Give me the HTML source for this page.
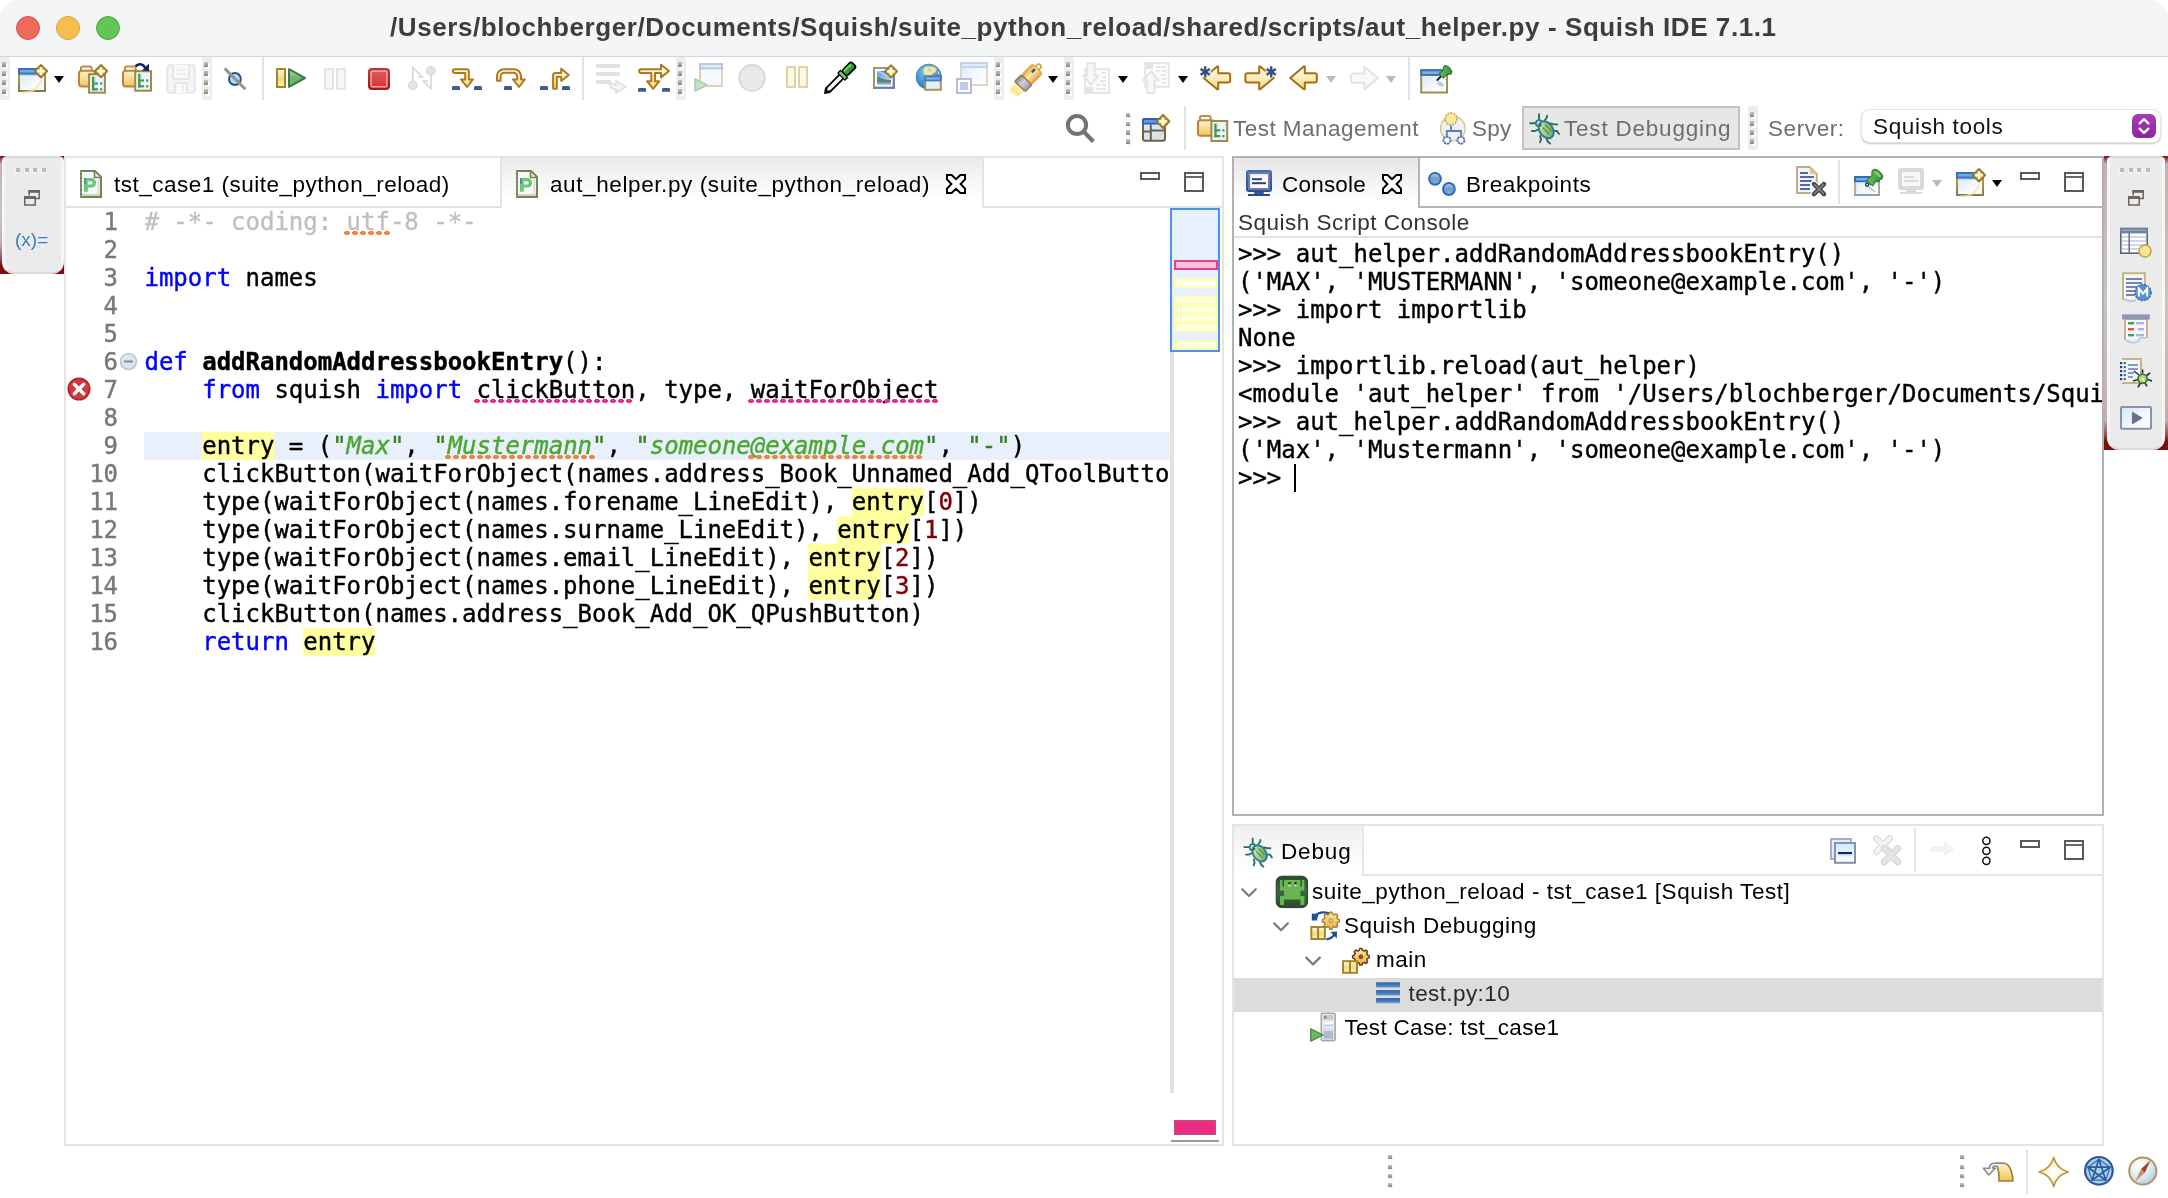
<!DOCTYPE html>
<html lang="en">
<head>
<meta charset="utf-8">
<title>Squish IDE</title>
<style>
html,body{margin:0;padding:0}
body{width:2168px;height:1198px;overflow:hidden;background:#fff;position:relative;font-family:"Liberation Sans",sans-serif;font-size:22.5px;color:#000}
#root{position:absolute;left:0;top:0;width:2168px;height:1198px;will-change:transform}
.a{position:absolute}
.t{position:absolute;white-space:pre;line-height:28px;height:28px}
.ui{font-family:"Liberation Sans",sans-serif;font-size:22.5px}
.mono{font-family:"DejaVu Sans Mono","Liberation Mono",monospace;font-size:24px;letter-spacing:-0.015px;-webkit-text-stroke:0.4px currentColor}
#titlebar{left:0;top:0;width:2168px;height:56px;background:#f4f5f7;border-bottom:1.5px solid #d6d6d6;border-radius:18px 18px 0 0}
#title{left:390px;top:12px;font-weight:bold;font-size:26px;color:#3d3d3d;line-height:30px;height:30px;letter-spacing:0.585px}
.tl{position:absolute;top:16px;width:24px;height:24px;border-radius:50%;box-sizing:border-box}
.hd{position:absolute;width:10px;background:#ededed}
.hd i{position:absolute;left:2px;width:4px;height:4.6px;background:linear-gradient(#cbc7bb,#8a8674);box-shadow:2px 2px 0 #fdfdfd}
.dot{position:absolute;width:4px;height:4.4px;background:linear-gradient(#cbc7bb,#8a8674);box-shadow:1.5px 1.5px 0 #f4f4f4}
.vs{position:absolute;width:2px;background:#e2e2e2}
.dd{position:absolute;width:0;height:0;border-left:5.2px solid transparent;border-right:5.2px solid transparent;border-top:7.4px solid #000}
.dd.g{border-top-color:#bcbcbc}
.panel{position:absolute;box-sizing:border-box;border:2px solid #e2e2e2;background:#fff}
.ln{position:absolute;left:65px;width:53px;text-align:right;color:#787878}
.code{position:absolute;left:144.5px}
.kw{color:#0000ff}
.cm{color:#c0c0c0}
.st{color:#4aa830;font-style:italic}
.q{color:#3f7d20}
.nu{color:#800000}
.fn{font-weight:bold}
.hl{background:#ffffa0;display:inline-block;height:28px;line-height:28px;vertical-align:top}
.sq{position:relative;display:inline-block;height:28px;line-height:28px;vertical-align:top}
.sq::after{content:"";position:absolute;left:-2.5px;top:22.8px;height:4.4px;width:var(--w);background-repeat:repeat-x;background-size:8px 4.4px}
.sq.o::after{background-image:radial-gradient(ellipse 3.1px 2.3px at 3px 2.2px,#f0853f 0,#f0853f 88%,rgba(240,133,63,0) 100%)}
.sq.p::after{background-image:radial-gradient(ellipse 3.1px 2.3px at 3px 2.2px,#e8308a 0,#e8308a 88%,rgba(232,48,138,0) 100%)}
</style>
</head>
<body>
<div id="root">
<!-- title bar -->
<div id="titlebar" class="a"></div>
<div class="tl" style="left:16px;background:#ee6a5f;border:1px solid #d8554a"></div>
<div class="tl" style="left:56px;background:#f5be4f;border:1px solid #d9a23d"></div>
<div class="tl" style="left:96px;background:#62c554;border:1px solid #52a943"></div>
<div id="title" class="t">/Users/blochberger/Documents/Squish/suite_python_reload/shared/scripts/aut_helper.py - Squish IDE 7.1.1</div>
<!-- toolbar 1 -->
<div class="hd" style="left:0px;top:57px;height:43px"><i style="top:5.200000000000003px"></i><i style="top:14.299999999999997px"></i><i style="top:23.200000000000003px"></i><i style="top:32px"></i></div>
<div class="hd" style="left:202px;top:57px;height:43px"><i style="top:5.200000000000003px"></i><i style="top:14.299999999999997px"></i><i style="top:23.200000000000003px"></i><i style="top:32px"></i></div>
<div class="hd" style="left:676px;top:57px;height:43px"><i style="top:5.200000000000003px"></i><i style="top:14.299999999999997px"></i><i style="top:23.200000000000003px"></i><i style="top:32px"></i></div>
<div class="hd" style="left:994px;top:57px;height:43px"><i style="top:5.200000000000003px"></i><i style="top:14.299999999999997px"></i><i style="top:23.200000000000003px"></i><i style="top:32px"></i></div>
<div class="hd" style="left:1064px;top:57px;height:43px"><i style="top:5.200000000000003px"></i><i style="top:14.299999999999997px"></i><i style="top:23.200000000000003px"></i><i style="top:32px"></i></div>
<div class="vs" style="left:262px;top:57px;height:43px;background:#e2e2e2"></div>
<div class="vs" style="left:582px;top:57px;height:43px;background:#e2e2e2"></div>
<div class="vs" style="left:1408px;top:57px;height:43px;background:#e2e2e2"></div>
<div class="dd" style="left:53.8px;top:76px"></div>
<div class="dd" style="left:1047.8px;top:76px"></div>
<div class="dd" style="left:1117.8px;top:76px"></div>
<div class="dd" style="left:1177.8px;top:76px"></div>
<div class="dd g" style="left:1325.8px;top:76px"></div>
<div class="dd g" style="left:1385.8px;top:76px"></div>
<!-- toolbar 2 -->
<div class="dot" style="left:1126px;top:112.7px"></div><div class="dot" style="left:1126px;top:121.7px"></div><div class="dot" style="left:1126px;top:130.4px"></div><div class="dot" style="left:1126px;top:139.4px"></div>
<div class="vs" style="left:1184px;top:106px;height:44px;background:#e2e2e2"></div>
<div class="a" style="left:1522px;top:106px;width:218px;height:44px;box-sizing:border-box;border:2px solid #c3c3c3;background:#e7e7e7"></div>
<div class="hd" style="left:1748px;top:106px;height:44px"><i style="top:6.200000000000003px"></i><i style="top:15.299999999999997px"></i><i style="top:24.19999999999999px"></i><i style="top:33px"></i></div>
<div class="t ui" style="left:1233px;top:115px;letter-spacing:0.47px;color:#6e6e6e">Test Management</div>
<div class="t ui" style="left:1472px;top:115px;letter-spacing:0.2px;color:#6e6e6e">Spy</div>
<div class="t ui" style="left:1564px;top:115px;letter-spacing:0.79px;color:#6e6e6e">Test Debugging</div>
<div class="t ui" style="left:1768px;top:115px;letter-spacing:0.6px;color:#6e6e6e">Server:</div>
<div class="a" style="left:1862px;top:110px;width:298px;height:32px;box-sizing:border-box;border-radius:8px;background:#fff;box-shadow:0 0 0 1px #e4e4e4,0 1px 2px 0.5px rgba(0,0,0,.22)"></div>
<div class="t ui" style="left:1873px;top:113px;letter-spacing:0.65px;color:#111">Squish tools</div>
<div class="a" style="left:2131.8px;top:113.8px;width:24.4px;height:24.4px;border-radius:6px;background:linear-gradient(#a83cb8,#8f22a2)"></div>
<!-- left trim -->
<div class="a" style="left:0px;top:156px;width:65px;height:118px;background:linear-gradient(#7a0d0d 0,#c4b0b0 8px,#cdc2c2 50%,#c2adad 88px,#9a4c4c 103px,#7a0d0d 109px)"></div><div class="a" style="left:1.5px;top:156px;width:62.0px;height:117.5px;box-sizing:border-box;border:3px solid #f5f5f5;border-top:2px solid #d9d9d9;border-bottom:2.5px solid #dcdcdc;border-radius:5px 5px 12px 12px;background:#ebebeb"></div><div class="a" style="left:16.0px;top:168px;width:4px;height:4px;background:#bebab0;box-shadow:-1px 1px 0 #fafafa"></div><div class="a" style="left:24.7px;top:168px;width:4px;height:4px;background:#bebab0;box-shadow:-1px 1px 0 #fafafa"></div><div class="a" style="left:33.4px;top:168px;width:4px;height:4px;background:#bebab0;box-shadow:-1px 1px 0 #fafafa"></div><div class="a" style="left:42.099999999999994px;top:168px;width:4px;height:4px;background:#bebab0;box-shadow:-1px 1px 0 #fafafa"></div><div class="t" style="left:15px;top:226px;font-size:19px;color:#3a7dc6;letter-spacing:0px">(x)=</div>
<!-- editor -->
<div class="panel" style="left:64px;top:156px;width:1160px;height:990px;border-color:#e4e4e4"></div>
<div class="a" style="left:66px;top:206px;width:1156px;height:2px;background:#e2e2e2"></div>
<div class="a" style="left:500px;top:158px;width:484px;height:50px;box-sizing:border-box;border-left:2px solid #e4e4e4;border-right:2px solid #e4e4e4;background:linear-gradient(#ebebeb 0%,#f6f6f6 45%,#fff 85%)"></div>
<div class="t ui" style="left:114px;top:171px;letter-spacing:0.5px;">tst_case1 (suite_python_reload)</div>
<div class="t ui" style="left:550px;top:171px;letter-spacing:0.6px;">aut_helper.py (suite_python_reload)</div>
<div class="a" style="left:144px;top:432px;width:1026px;height:28px;background:#e8f0fb"></div>
<div class="a mono ln" style="top:208px;line-height:28px;white-space:pre">1
2
3
4
5
6
7
8
9
10
11
12
13
14
15
16</div>
<div class="a mono code" style="top:208px;line-height:28px;white-space:pre;width:1025px;overflow:hidden"><span class="cm"># -*- coding: <span class="sq o" style="--w:46px">utf</span>-8 -*-</span>

<span class="kw">import</span> names


<span class="kw">def</span> <span class="fn">addRandomAddressbookEntry</span>():
    <span class="kw">from</span> squish <span class="kw">import</span> <span class="sq p" style="--w:158px">clickButton</span>, type, <span class="sq p" style="--w:190px">waitForObject</span>

    <span class="hl">entry</span> = (<span class="q">"</span><span class="st">Max</span><span class="q">"</span>, <span class="q">"</span><span class="st sq o" style="--w:150px">Mustermann</span><span class="q">"</span>, <span class="q">"</span><span class="st">someone<span class="sq o" style="--w:174px">@example.com</span></span><span class="q">"</span>, <span class="q">"-"</span>)
    clickButton(waitForObject(names.address_Book_Unnamed_Add_QToolButton))
    type(waitForObject(names.forename_LineEdit), <span class="hl">entry</span>[<span class="nu">0</span>])
    type(waitForObject(names.surname_LineEdit), <span class="hl">entry</span>[<span class="nu">1</span>])
    type(waitForObject(names.email_LineEdit), <span class="hl">entry</span>[<span class="nu">2</span>])
    type(waitForObject(names.phone_LineEdit), <span class="hl">entry</span>[<span class="nu">3</span>])
    clickButton(names.address_Book_Add_OK_QPushButton)
    <span class="kw">return</span> <span class="hl">entry</span></div>
<div class="a" style="left:1170px;top:208px;width:4px;height:885px;background:#e2e2e2"></div>
<div class="a" style="left:1170px;top:208px;width:50px;height:144px;box-sizing:border-box;border:2px solid #4b90f2;background:#e7f1fd"></div>
<div class="a" style="left:1174px;top:260px;width:44px;height:10px;box-sizing:border-box;border:2px solid #e83e8c;background:#f7bfd8"></div>
<div class="a" style="left:1174px;top:278px;width:44px;height:10px;box-sizing:border-box;border:2px solid #ffffb4;background:#ffffe6"></div>
<div class="a" style="left:1174px;top:296px;width:44px;height:9px;box-sizing:border-box;border:2px solid #ffffb4;background:#ffffe6"></div>
<div class="a" style="left:1174px;top:305px;width:44px;height:9px;box-sizing:border-box;border:2px solid #ffffb4;background:#ffffe6"></div>
<div class="a" style="left:1174px;top:314px;width:44px;height:9px;box-sizing:border-box;border:2px solid #ffffb4;background:#ffffe6"></div>
<div class="a" style="left:1174px;top:323px;width:44px;height:9px;box-sizing:border-box;border:2px solid #ffffb4;background:#ffffe6"></div>
<div class="a" style="left:1174px;top:340px;width:44px;height:10px;box-sizing:border-box;border:2px solid #ffffb4;background:#ffffe6"></div>
<div class="a" style="left:1174px;top:1120px;width:42px;height:15px;box-sizing:border-box;border:1px solid #b0577e;background:#ec2c82"></div>
<div class="a" style="left:1171px;top:1140px;width:48px;height:2px;background:#9a9a9a"></div>
<!-- console -->
<div class="panel" style="left:1232px;top:156px;width:872px;height:660px;border-color:#b2b2b2"></div>
<div class="a" style="left:1234px;top:158px;width:186px;height:49px;box-sizing:border-box;border-right:2px solid #b5b5b5;background:linear-gradient(#e6e6e6 0%,#f4f4f4 50%,#fff 90%)"></div>
<div class="a" style="left:1418px;top:206px;width:684px;height:2px;background:#b5b5b5"></div>
<div class="t ui" style="left:1282px;top:171px;letter-spacing:0.2px;">Console</div>
<div class="t ui" style="left:1466px;top:171px;letter-spacing:0.6px;">Breakpoints</div>
<div class="t ui" style="left:1238px;top:209px;letter-spacing:0.5px;color:#333">Squish Script Console</div>
<div class="a" style="left:1234px;top:235.5px;width:868px;height:2px;background:#e2e2e2"></div>
<div class="vs" style="left:1838px;top:160px;height:44px;background:#e2e2e2"></div>
<div class="dd g" style="left:1931.8px;top:180px"></div>
<div class="dd" style="left:1991.8px;top:180px"></div>
<div class="a mono" style="left:1238px;top:240px;width:864px;height:560px;overflow:hidden;line-height:28px;white-space:pre">&gt;&gt;&gt; aut_helper.addRandomAddressbookEntry()
('MAX', 'MUSTERMANN', 'someone@example.com', '-')
&gt;&gt;&gt; import importlib
None
&gt;&gt;&gt; importlib.reload(aut_helper)
&lt;module 'aut_helper' from '/Users/blochberger/Documents/Squish/suite_python_reload/shared/scripts/aut_helper.py'&gt;
&gt;&gt;&gt; aut_helper.addRandomAddressbookEntry()
('Max', 'Mustermann', 'someone@example.com', '-')
&gt;&gt;&gt; </div>
<div class="a" style="left:1294px;top:464px;width:2px;height:28px;background:#000"></div>
<!-- debug -->
<div class="panel" style="left:1232px;top:824px;width:872px;height:322px;border-color:#e4e4e4"></div>
<div class="a" style="left:1234px;top:826px;width:130px;height:49px;box-sizing:border-box;border-right:2px solid #e6e6e6;background:linear-gradient(#efefef 0%,#f8f8f8 50%,#fff 90%)"></div>
<div class="a" style="left:1362px;top:874px;width:740px;height:2px;background:#e4e4e4"></div>
<div class="t ui" style="left:1281px;top:838px;letter-spacing:0.86px;">Debug</div>
<div class="vs" style="left:1914px;top:828px;height:44px;background:#e2e2e2"></div>
<div class="a" style="left:1234px;top:978px;width:868px;height:34px;background:#dcdcdc"></div>
<div class="t ui" style="left:1312px;top:878px;letter-spacing:0.55px;">suite_python_reload - tst_case1 [Squish Test]</div>
<div class="t ui" style="left:1344px;top:912px;letter-spacing:0.55px;">Squish Debugging</div>
<div class="t ui" style="left:1376px;top:946px;letter-spacing:0.5px;">main</div>
<div class="t ui" style="left:1408.5px;top:980px;letter-spacing:0.4px;color:#2a2a2a">test.py:10</div>
<div class="t ui" style="left:1344.5px;top:1014px;letter-spacing:0.3px;">Test Case: tst_case1</div>
<!-- right trim -->
<div class="a" style="left:2104px;top:156px;width:64px;height:294px;background:linear-gradient(#7a0d0d 0,#c4b0b0 8px,#cdc2c2 50%,#c2adad 264px,#9a4c4c 279px,#7a0d0d 285px)"></div><div class="a" style="left:2106.5px;top:156px;width:58.5px;height:293.5px;box-sizing:border-box;border:3px solid #f5f5f5;border-top:2px solid #d9d9d9;border-bottom:2.5px solid #dcdcdc;border-radius:5px 5px 12px 12px;background:#ebebeb"></div><div class="a" style="left:2120.0px;top:168px;width:4px;height:4px;background:#bebab0;box-shadow:-1px 1px 0 #fafafa"></div><div class="a" style="left:2128.7px;top:168px;width:4px;height:4px;background:#bebab0;box-shadow:-1px 1px 0 #fafafa"></div><div class="a" style="left:2137.4px;top:168px;width:4px;height:4px;background:#bebab0;box-shadow:-1px 1px 0 #fafafa"></div><div class="a" style="left:2146.1px;top:168px;width:4px;height:4px;background:#bebab0;box-shadow:-1px 1px 0 #fafafa"></div>
<!-- status -->
<div class="dot" style="left:1388px;top:1155px"></div><div class="dot" style="left:1388px;top:1164.5px"></div><div class="dot" style="left:1388px;top:1174px"></div><div class="dot" style="left:1388px;top:1183px"></div>
<div class="dot" style="left:1960px;top:1155px"></div><div class="dot" style="left:1960px;top:1164.5px"></div><div class="dot" style="left:1960px;top:1174px"></div><div class="dot" style="left:1960px;top:1183px"></div>
<div class="vs" style="left:2026px;top:1150px;height:44px;background:#e2e2e2"></div>
<svg class="a" style="left:0;top:0;overflow:visible" width="2168" height="1198" viewBox="0 0 2168 1198">
<defs>
<linearGradient id="gy" x1="0" y1="0" x2="0" y2="1"><stop offset="0" stop-color="#fffef4"/><stop offset="1" stop-color="#f6dc84"/></linearGradient>
<linearGradient id="gyb" x1="0" y1="0" x2="0" y2="1"><stop offset="0" stop-color="#fffbe4"/><stop offset=".55" stop-color="#f1d97c"/><stop offset="1" stop-color="#fff6cf"/></linearGradient>
<linearGradient id="gw" x1="0" y1="0" x2="1" y2="1"><stop offset="0" stop-color="#d3e7fb"/><stop offset=".6" stop-color="#f4f9fe"/><stop offset="1" stop-color="#ffffff"/></linearGradient>
<linearGradient id="gframe" x1="0" y1="0" x2="0" y2="1"><stop offset="0" stop-color="#4a72b0"/><stop offset=".3" stop-color="#b09a56"/><stop offset="1" stop-color="#857a50"/></linearGradient>
<linearGradient id="gf" x1="0" y1="0" x2="0" y2="1"><stop offset="0" stop-color="#fef4cc"/><stop offset="1" stop-color="#f2c45a"/></linearGradient>
<linearGradient id="gg" x1="0" y1="0" x2="0" y2="1"><stop offset="0" stop-color="#bfe0a2"/><stop offset=".5" stop-color="#6db366"/><stop offset="1" stop-color="#7cba62"/></linearGradient>
<linearGradient id="gr" x1="0" y1="0" x2="0" y2="1"><stop offset="0" stop-color="#dd5e5e"/><stop offset="1" stop-color="#d63232"/></linearGradient>
<linearGradient id="grs" x1="0" y1="0" x2="0" y2="1"><stop offset="0" stop-color="#bd3a34"/><stop offset="1" stop-color="#a41a1a"/></linearGradient>
<linearGradient id="gd" x1="0" y1="0" x2="0" y2="1"><stop offset="0" stop-color="#b8932f"/><stop offset="1" stop-color="#d9bd6e"/></linearGradient>
<linearGradient id="gbp" x1="0" y1="0" x2="0" y2="1"><stop offset="0" stop-color="#b9cfe6"/><stop offset=".5" stop-color="#6f9bc9"/><stop offset="1" stop-color="#8fb3d8"/></linearGradient>
<radialGradient id="ggl" cx=".4" cy=".3" r=".8"><stop offset="0" stop-color="#86c6f0"/><stop offset=".6" stop-color="#3f8ed0"/><stop offset="1" stop-color="#1f5fa8"/></radialGradient>
<linearGradient id="gfl" x1="0" y1="0" x2="0" y2="1"><stop offset="0" stop-color="#f0a830"/><stop offset=".45" stop-color="#fde9a8"/><stop offset="1" stop-color="#e9a23a"/></linearGradient>
<linearGradient id="gflb" x1="0" y1="0" x2="0" y2="1"><stop offset="0" stop-color="#8f8a98"/><stop offset=".45" stop-color="#d4d0dc"/><stop offset="1" stop-color="#9a94a4"/></linearGradient>
<linearGradient id="gbeam" x1="1" y1="0" x2="0" y2="0"><stop offset="0" stop-color="#fff6c8"/><stop offset=".6" stop-color="#fbe28a"/><stop offset="1" stop-color="#fbe28a" stop-opacity="0"/></linearGradient>
<linearGradient id="gbug" x1="0" y1="0" x2="1" y2="1"><stop offset="0" stop-color="#e4f0d0"/><stop offset=".5" stop-color="#9cc884"/><stop offset="1" stop-color="#5c9a48"/></linearGradient>
<linearGradient id="gsky" x1="0" y1="0" x2="0" y2="1"><stop offset="0" stop-color="#3f86e4"/><stop offset=".62" stop-color="#b4d6f4"/><stop offset=".7" stop-color="#3a64a8"/><stop offset="1" stop-color="#c4d4ea"/></linearGradient>
<linearGradient id="gpin" x1="0" y1="0" x2="1" y2="1"><stop offset="0" stop-color="#7cc860"/><stop offset="1" stop-color="#2f8a34"/></linearGradient>
<linearGradient id="gmon" x1="0" y1="0" x2="0" y2="1"><stop offset="0" stop-color="#416fc4"/><stop offset="1" stop-color="#264f9e"/></linearGradient>
<linearGradient id="gcol" x1="0" y1="0" x2="0" y2="1"><stop offset="0" stop-color="#cfe7fc"/><stop offset="1" stop-color="#ffffff"/></linearGradient>
<linearGradient id="gsf" x1="0" y1="0" x2="0" y2="1"><stop offset="0" stop-color="#2f62a4"/><stop offset=".7" stop-color="#4f82bf"/><stop offset="1" stop-color="#a8c8e8"/></linearGradient>
<linearGradient id="ggear" x1="0" y1="0" x2="0" y2="1"><stop offset="0" stop-color="#fdec80"/><stop offset="1" stop-color="#f0ac3c"/></linearGradient>
<radialGradient id="gstar" cx=".5" cy=".5" r=".5"><stop offset="0" stop-color="#ffffff"/><stop offset=".6" stop-color="#fdf6dc"/><stop offset="1" stop-color="#f3dc8c"/></radialGradient>
<radialGradient id="gcomp" cx=".35" cy=".3" r=".8"><stop offset="0" stop-color="#ffffff"/><stop offset=".6" stop-color="#d8e6f4"/><stop offset="1" stop-color="#a8c4e0"/></radialGradient>
<linearGradient id="gfrog" x1="0" y1="0" x2="0" y2="1"><stop offset="0" stop-color="#2c4a2e"/><stop offset=".5" stop-color="#3f6640"/><stop offset="1" stop-color="#2a4a2c"/></linearGradient>
</defs>
<!-- tb1 -->
<rect x="19" y="69" width="26" height="22" fill="url(#gw)" stroke="url(#gframe)" stroke-width="2"/><rect x="20" y="74.5" width="24" height="1.5" fill="#bcd6f2"/><rect x="18" y="68" width="28" height="6.6" fill="#416fb4"/><rect x="20" y="70" width="24" height="2.6" fill="#62b0ea"/><path d="M22 92.6 Q37 92.6 41.6 80" stroke="#f7e6a0" stroke-width="2.2" fill="none" opacity=".7"/><path d="M41 64.9 L47.3 71.2 L41 77.5 L34.7 71.2 Z" fill="url(#gd)" stroke="#9a7a22" stroke-width="1.8" stroke-linejoin="round"/><path d="M41 67.3 V75.10000000000001 M37.1 71.2 H44.9" stroke="#fffbe6" stroke-width="2.7"/>
<path d="M81 70.6 V68.19999999999999 a1.6 1.6 0 0 1 1.6 -1.6 H90 a1.6 1.6 0 0 1 1.6 1.6 V70.6" fill="none" stroke="#c68a48" stroke-width="2"/><rect x="79" y="70.8" width="16" height="15.6" rx="2.6" fill="url(#gf)" stroke="#c2803c" stroke-width="2"/><rect x="89.1" y="74.2" width="15.8" height="18.5" fill="#eef2fb" stroke="#9c8a48" stroke-width="2"/><rect x="92.0" y="76.8" width="2.4" height="13.6" fill="#3f9a54"/><rect x="92.0" y="82.39999999999999" width="6" height="2.2" fill="#3f9a54"/><rect x="92.0" y="88.2" width="6" height="2.2" fill="#3f9a54"/><rect x="100.0" y="82.39999999999999" width="2.2" height="2.2" fill="#3f9a54"/><rect x="100.0" y="88.2" width="2.2" height="2.2" fill="#3f9a54"/><rect x="94.4" y="76.8" width="1.4" height="5.6" fill="#bfe0c8"/><path d="M101 64.8 L107.3 71.1 L101 77.39999999999999 L94.7 71.1 Z" fill="url(#gd)" stroke="#9a7a22" stroke-width="1.8" stroke-linejoin="round"/><path d="M101 67.19999999999999 V75.0 M97.1 71.1 H104.9" stroke="#fffbe6" stroke-width="2.7"/>
<path d="M125 70.6 V68.19999999999999 a1.6 1.6 0 0 1 1.6 -1.6 H134 a1.6 1.6 0 0 1 1.6 1.6 V70.6" fill="none" stroke="#c68a48" stroke-width="2"/><rect x="123" y="70.8" width="16" height="15.6" rx="2.6" fill="url(#gf)" stroke="#c2803c" stroke-width="2"/><rect x="135.2" y="71.2" width="15.8" height="19.5" fill="#eef2fb" stroke="#9c8a48" stroke-width="2"/><rect x="138.1" y="73.8" width="2.4" height="13.6" fill="#3f9a54"/><rect x="138.1" y="79.39999999999999" width="6" height="2.2" fill="#3f9a54"/><rect x="138.1" y="85.2" width="6" height="2.2" fill="#3f9a54"/><rect x="146.1" y="79.39999999999999" width="2.2" height="2.2" fill="#3f9a54"/><rect x="146.1" y="85.2" width="2.2" height="2.2" fill="#3f9a54"/><rect x="140.5" y="73.8" width="1.4" height="5.6" fill="#bfe0c8"/>
<path d="M135.5 66.2 Q141 61.5 145.5 68" fill="none" stroke="#10265c" stroke-width="2.6"/><path d="M149 63.6 L149 71 L142 70.6 Z" fill="#10265c"/>
<rect x="167.3" y="65.2" width="27.4" height="27.6" rx="2.5" fill="#f5f5f5" stroke="#e6e6e6" stroke-width="2"/><path d="M173 65 V77.5 a1.5 1.5 0 0 0 1.5 1.5 H187.5 a1.5 1.5 0 0 0 1.5 -1.5 V65" fill="#f9f9f9" stroke="#e6e6e6" stroke-width="2"/><path d="M175 93 V84.5 a1.5 1.5 0 0 1 1.5 -1.5 H185.5 a1.5 1.5 0 0 1 1.5 1.5 V93" fill="#fafafa" stroke="#e6e6e6" stroke-width="2"/><rect x="176" y="69" width="10" height="1.5" fill="#ececec"/><rect x="176" y="73" width="10" height="1.5" fill="#ececec"/><rect x="182.3" y="85" width="1.8" height="6" fill="#e6e6e6"/>
<circle cx="234.9" cy="79" r="5.9" fill="#bdd9ee" stroke="#1c5290" stroke-width="2"/><path d="M224.6 68.4 L245.4 89.2" stroke="#939393" stroke-width="3"/>
<rect x="277" y="69" width="8" height="18" fill="url(#gyb)" stroke="#a8861f" stroke-width="2"/><path d="M289 69.2 L305 78 L289 86.8 Z" fill="url(#gg)" stroke="#3a7a54" stroke-width="2" stroke-linejoin="round"/>
<rect x="325" y="69.2" width="8" height="19.6" fill="#f7f7f7" stroke="#e4e4e4" stroke-width="2"/><rect x="337" y="69.2" width="8" height="19.6" fill="#f7f7f7" stroke="#e4e4e4" stroke-width="2"/>
<rect x="369" y="69" width="20" height="20" rx="3" fill="url(#gr)" stroke="url(#grs)" stroke-width="2"/><rect x="371.2" y="71.2" width="15.6" height="15.6" rx="1" fill="none" stroke="#efa29c" stroke-width="1.5"/>
<g fill="none" stroke="#d6d6d6" stroke-width="1.6"><path d="M412.8 81 V67.5 L421.5 76.3 M418.2 77 H423.8"/><path d="M430.9 75.5 V88.5 L424 81.6 M422 81 H428"/></g><circle cx="430.8" cy="70.9" r="4.4" fill="#e4e4e4" stroke="#d2d2d2" stroke-width="1"/><circle cx="412.8" cy="85.3" r="4.4" fill="#e4e4e4" stroke="#d2d2d2" stroke-width="1"/>
<path d="M454.6 69.2 H467 a1.8 1.8 0 0 1 1.8 1.8 V79.4 H473 L467 87 L461 79.4 H465.2 V72.9 H454.6 a1.8 1.8 0 0 1 -1.8 -1.8 a1.8 1.8 0 0 1 1.8 -1.9 Z" fill="url(#gy)" stroke="#ad7a1a" stroke-width="2" stroke-linejoin="round"/>
<path d="M452 89.89999999999999 V87.5 Q452 86.1 453.4 86.1 H458.6 Q460 86.1 460 87.5 V89.89999999999999 Z" fill="#3d5c8e"/><path d="M474 89.89999999999999 V87.5 Q474 86.1 475.4 86.1 H480.6 Q482 86.1 482 87.5 V89.89999999999999 Z" fill="#3d5c8e"/>
<path d="M497 80.7 V76 a6.8 6.8 0 0 1 6.8 -6.8 H514 a7 7 0 0 1 7 7 V79.4 H524.8 L519 87 L513 79.4 H517.2 V76.4 a3.6 3.6 0 0 0 -3.6 -3.6 H504.2 a3.6 3.6 0 0 0 -3.6 3.6 V80.7 Z" fill="url(#gy)" stroke="#ad7a1a" stroke-width="2" stroke-linejoin="round"/>
<path d="M504 89.89999999999999 V87.5 Q504 86.1 505.4 86.1 H510.6 Q512 86.1 512 87.5 V89.89999999999999 Z" fill="#3d5c8e"/>
<path d="M553.1 88.8 V75.6 a2.6 2.6 0 0 1 2.6 -2.6 H561.2 V68.8 L568.8 75 L561.2 81 V76.8 H556.8 V88.8 Z" fill="url(#gy)" stroke="#ad7a1a" stroke-width="2" stroke-linejoin="round"/>
<path d="M540 89.89999999999999 V87.5 Q540 86.1 541.4 86.1 H546.6 Q548 86.1 548 87.5 V89.89999999999999 Z" fill="#3d5c8e"/><path d="M562 89.89999999999999 V87.5 Q562 86.1 563.4 86.1 H568.6 Q570 86.1 570 87.5 V89.89999999999999 Z" fill="#3d5c8e"/>
<rect x="596" y="64" width="24" height="4" fill="#e2e2e2"/><rect x="596" y="72" width="24" height="4" fill="#e2e2e2"/><rect x="596" y="80" width="14" height="4" fill="#e2e2e2"/><path d="M609.5 80 Q611 85 616 84.8 V80.6 L625.6 86.8 L616 93 V89 Q608 89 609.5 80 Z" fill="#f4f4f4" stroke="#dedede" stroke-width="1.6" stroke-linejoin="round"/>
<path d="M641 69.2 H661 V64.8 L669 71 L661 77.4 V73 H655 V81.2 H659.3 L653.2 88.8 L647 81.2 H651.3 V73 H641 a1.9 1.9 0 0 1 0 -3.8 Z" fill="url(#gy)" stroke="#ad7a1a" stroke-width="2" stroke-linejoin="round"/>
<path d="M638 91.8 V89.4 Q638 88 639.4 88 H644.6 Q646 88 646 89.4 V91.8 Z" fill="#3d5c8e"/><path d="M662 91.8 V89.4 Q662 88 663.4 88 H668.6 Q670 88 670 89.4 V91.8 Z" fill="#3d5c8e"/>
<rect x="700" y="64" width="22" height="22" fill="#f5f9fe" stroke="#dcd3ba" stroke-width="2"/><rect x="699" y="63" width="24" height="6.4" fill="#b9c9e5"/><rect x="701" y="65" width="20" height="2.4" fill="#d9edf8"/><path d="M695 79 L707.2 85 L695 91 Z" fill="#c6e0c2" stroke="#a9d0b2" stroke-width="1.6" stroke-linejoin="round"/>
<circle cx="752" cy="77.9" r="12.9" fill="#ebe8e8" stroke="#d8d8d8" stroke-width="1.8"/>
<rect x="787" y="67.1" width="8" height="19.8" fill="#fff9e2" stroke="#ded2a6" stroke-width="2"/><rect x="799" y="67.1" width="8" height="19.8" fill="#fff9e2" stroke="#ded2a6" stroke-width="2"/>
<g transform="translate(824 94) rotate(-45)"><path d="M0 0 L5 -3.6 H27 V3.6 H5 Z" fill="#000"/><path d="M4.5 0 L7 -1.8 H26 V1.8 H7 Z" fill="#f4f4f4"/><rect x="24" y="-5.6" width="5" height="11.2" fill="#000"/><rect x="25.2" y="-4.2" width="2.6" height="8.4" fill="#6fd06a"/><rect x="28.4" y="-4.6" width="14.4" height="9.2" rx="3" fill="#000"/><rect x="29.4" y="-3.2" width="12" height="6" rx="2" fill="#2f9e2c"/><rect x="30" y="-3" width="10" height="2.2" rx="1" fill="#6fd06a"/></g>
<rect x="874" y="68" width="19.8" height="19.8" fill="#fff" stroke="#8a8a86" stroke-width="2"/><path d="M873 67 H895 M873 67 V89" stroke="#a39a72" stroke-width="0" fill="none"/><path d="M874 88.8 V68 H894" fill="none" stroke="#a09670" stroke-width="2"/><path d="M874 87.8 H893.8 V68" fill="none" stroke="#6e80aa" stroke-width="2"/><rect x="877" y="71" width="14" height="14" fill="url(#gsky)"/><path d="M877 76.2 Q884 79.6 891 80.6 V82 H877 Z" fill="#5a8c68"/><path d="M877 72 L891 78.6 V76 L880 71 H877 Z" fill="#eaf4fc" opacity=".55"/><path d="M891 65.1 L897.2 71.3 L891 77.5 L884.8 71.3 Z" fill="url(#gd)" stroke="#9a7a22" stroke-width="1.8" stroke-linejoin="round"/><path d="M891 67.39999999999999 V75.2 M887.1 71.3 H894.9" stroke="#fffbe6" stroke-width="2.7"/>
<circle cx="928.7" cy="76.8" r="12.6" fill="url(#ggl)" stroke="#3a86c4" stroke-width="1"/><path d="M923 69.4 Q925 65.6 929.6 66 Q934.4 66 937.4 69.4 Q935 70 936.4 72.6 Q933.4 72 932 75 Q934 78 930.4 79 Q926 80.4 925.6 76.4 Q922.4 73.4 923 69.4 Z" fill="#e6eab8" stroke="#b4ac68" stroke-width=".8"/><path d="M929 67 Q932 68.5 931 71.5 Q928.6 73 927.6 70 Z" fill="#c4d088" opacity=".7"/><path d="M937.6 70.6 Q939.6 72.4 940 74.6 L938 74 Z" fill="#dfe4b0"/><rect x="925.2" y="76.4" width="15.6" height="13.4" fill="#e3f0fc" stroke="#a89458" stroke-width="2"/><rect x="924.2" y="75.4" width="17.6" height="6" fill="#4a78c2"/><rect x="926.2" y="77.4" width="13.6" height="2.2" fill="#7cb4ea"/>
<rect x="961" y="63" width="26" height="22" fill="url(#gw)" stroke="#dcd5bb" stroke-width="2" opacity=".9"/><rect x="960" y="62" width="28" height="6" fill="#c3d2e9"/><rect x="962" y="64" width="24" height="2.2" fill="#dcedf8"/><rect x="957" y="79" width="14" height="14" fill="#fff" stroke="#b1bfdd" stroke-width="2"/><rect x="960" y="82" width="8" height="8" fill="#c0cde9"/>
<g transform="translate(1020 86.5) rotate(-45.7)"><path d="M-12 -4.6 L0 -7 V7 L-12 4.6 Z" fill="url(#gbeam)"/><circle cx="27.2" cy="-0.5" r="2.5" fill="none" stroke="#d9a040" stroke-width="1.6"/><rect x="8.5" y="-6.9" width="16.5" height="13.8" rx="2.6" fill="url(#gfl)" stroke="#e0982c" stroke-width="1"/><rect x="0" y="-7.3" width="9.4" height="14.6" rx="1.5" fill="url(#gflb)" stroke="#8a7a50" stroke-width="1.4"/><rect x="18.4" y="-2.8" width="4.6" height="2.6" rx=".8" fill="#2f58b0"/></g>
<rect x="1085" y="69.2" width="24" height="23.8" fill="#fbfbfb" stroke="#e6e6e6" stroke-width="2"/><rect x="1085" y="87" width="8" height="6" fill="#e4e4e4"/><g fill="#e6e6e6"><rect x="1102" y="72" width="4" height="1.8"/><rect x="1102" y="76" width="4" height="1.8"/><rect x="1100" y="80" width="6" height="1.8"/><rect x="1096" y="84" width="4" height="1.8"/><rect x="1102" y="84" width="4" height="1.8"/><rect x="1096" y="88" width="10" height="1.8"/></g><path d="M1087.3 63.2 H1094.6 V75.6 H1098.6 L1091 84.6 L1083.2 75.6 H1087.3 Z" fill="#f8f8f8" stroke="#e3e3e3" stroke-width="1.8" stroke-linejoin="round"/>
<rect x="1145.2" y="63" width="23.6" height="23.8" fill="#fbfbfb" stroke="#e6e6e6" stroke-width="2"/><rect x="1145" y="63" width="8" height="6" fill="#e4e4e4"/><g fill="#e6e6e6"><rect x="1156" y="66" width="10" height="1.8"/><rect x="1156" y="70" width="4" height="1.8"/><rect x="1162" y="70" width="4" height="1.8"/><rect x="1160" y="74" width="6" height="1.8"/><rect x="1162" y="78" width="4" height="1.8"/><rect x="1162" y="82" width="4" height="1.8"/></g><path d="M1151 71.2 L1158.8 80.4 H1154.6 V93 H1147.4 V80.4 H1143.2 Z" fill="#f8f8f8" stroke="#e3e3e3" stroke-width="1.8" stroke-linejoin="round"/>
<path d="M1203.6 77.9 L1217.1999999999998 66.6 H1218.1999999999998 V73.2 H1228.1999999999998 a2 2 0 0 1 2 2 V80.6 a2 2 0 0 1 -2 2 H1218.1999999999998 V89.2 H1217.1999999999998 Z" fill="url(#gy)" stroke="#a86c14" stroke-width="2" stroke-linejoin="round"/><circle cx="1205.2" cy="71.9" r="6" fill="#f6eccc" opacity=".9"/><path d="M1205.2 66.30000000000001 V77.5 M1200.6000000000001 69.0 L1209.8 74.80000000000001 M1200.6000000000001 74.80000000000001 L1209.8 69.0" stroke="#2c4f8c" stroke-width="2.2"/>
<path d="M1273.8 77.9 L1260.2 66.6 H1259.2 V73.2 H1247.4 a2 2 0 0 0 -2 2 V80.6 a2 2 0 0 0 2 2 H1259.2 V89.2 H1260.2 Z" fill="url(#gy)" stroke="#a86c14" stroke-width="2" stroke-linejoin="round"/><circle cx="1271.2" cy="71.9" r="6" fill="#f6eccc" opacity=".9"/><path d="M1271.2 66.30000000000001 V77.5 M1266.6000000000001 69.0 L1275.8 74.80000000000001 M1266.6000000000001 74.80000000000001 L1275.8 69.0" stroke="#2c4f8c" stroke-width="2.2"/>
<path d="M1290.2 77.9 L1303.8 66.6 H1304.8 V73.2 H1314.8 a2 2 0 0 1 2 2 V80.6 a2 2 0 0 1 -2 2 H1304.8 V89.2 H1303.8 Z" fill="url(#gy)" stroke="#a86c14" stroke-width="2" stroke-linejoin="round"/>
<path d="M1378 78 L1365 67.2 H1364.4 V73.4 H1353.2 a2 2 0 0 0 -2 2 V80.8 a2 2 0 0 0 2 2 H1364.4 V89 H1365 Z" fill="#f9f9f9" stroke="#e3e3e3" stroke-width="2" stroke-linejoin="round"/>
<rect x="1421.2" y="70.3" width="25.8" height="22.2" fill="url(#gw)" stroke="#a08f50" stroke-width="2"/><rect x="1420.2" y="69.3" width="27.8" height="6.6" fill="#3f6db3"/><rect x="1422.2" y="71.3" width="23.8" height="2.6" fill="#7ab8ea"/><ellipse cx="1440.5" cy="84" rx="3.6" ry="2" fill="#6a9ab8" opacity=".45" transform="rotate(35 1440.5 84)"/><path d="M1441.6 75.6 L1436.8 80.6" stroke="#111" stroke-width="1.8"/><g transform="translate(1445.2 72.2) rotate(-42)"><path d="M-5 -3.2 Q-2 -2.4 0 -3 L2.6 -5 Q6 -5.6 6 0 Q6 5.6 2.6 5 L0 3 Q-2 2.4 -5 3.2 Q-6.6 0 -5 -3.2 Z" fill="url(#gpin)" stroke="#2f7a30" stroke-width="1.2"/></g>
<!-- tb2 -->
<circle cx="1077" cy="125" r="9.1" fill="none" stroke="#737373" stroke-width="4"/><path d="M1083.8 131.8 L1093.4 141.4" stroke="#737373" stroke-width="4.2"/>
<rect x="1143" y="119" width="22" height="21.8" rx="2" fill="#d5e8f8" stroke="#6c6444" stroke-width="2"/><path d="M1142 124.6 V120.4 a2.4 2.4 0 0 1 2.4 -2.4 H1163.6 a2.4 2.4 0 0 1 2.4 2.4 V124.6 Z" fill="#2f5fb2"/><rect x="1144" y="120" width="20" height="2.8" fill="#5b9ae2"/><path d="M1150.8 124.6 V140 M1144 131.4 H1150 M1151.6 130.4 H1164" stroke="#6c6444" stroke-width="2"/><g fill="#f0d27a"><rect x="1152.6" y="138" width="1.6" height="1.6"/><rect x="1155.4" y="136.6" width="2" height="2"/><rect x="1158.4" y="134.8" width="2.2" height="2.2"/><rect x="1161" y="132.8" width="2" height="2"/></g><path d="M1163 114.80000000000001 L1169.6 121.4 L1163 128.0 L1156.4 121.4 Z" fill="url(#gd)" stroke="#9a7a22" stroke-width="1.8" stroke-linejoin="round"/><path d="M1163 117.5 V125.30000000000001 M1159.1 121.4 H1166.9" stroke="#fffbe6" stroke-width="2.7"/>
<path d="M1200 120 V117.6 a1.6 1.6 0 0 1 1.6 -1.6 H1209 a1.6 1.6 0 0 1 1.6 1.6 V120" fill="none" stroke="#c68a48" stroke-width="2"/><rect x="1198" y="120.2" width="16" height="15.6" rx="2.6" fill="url(#gf)" stroke="#c2803c" stroke-width="2"/><rect x="1211.4" y="121" width="15.8" height="20" fill="#eef2fb" stroke="#9c8a48" stroke-width="2"/><rect x="1214.3000000000002" y="123.6" width="2.4" height="13.6" fill="#3f9a54"/><rect x="1214.3000000000002" y="129.2" width="6" height="2.2" fill="#3f9a54"/><rect x="1214.3000000000002" y="135.0" width="6" height="2.2" fill="#3f9a54"/><rect x="1222.3000000000002" y="129.2" width="2.2" height="2.2" fill="#3f9a54"/><rect x="1222.3000000000002" y="135.0" width="2.2" height="2.2" fill="#3f9a54"/><rect x="1216.7000000000003" y="123.6" width="1.4" height="5.6" fill="#bfe0c8"/>
<circle cx="1452.9" cy="128.4" r="12.3" fill="#eef0f8" stroke="#dcc88c" stroke-width="1.5"/><circle cx="1451" cy="118.9" r="6" fill="#fbe7a0" stroke="#c8a848" stroke-width="1.6" stroke-dasharray="2 1"/><path d="M1451 125.4 V131 M1446.8 136 V131 H1461 V136" fill="none" stroke="#5c7ebc" stroke-width="1.8"/><circle cx="1446.9" cy="140.2" r="3.5" fill="#fff" stroke="#5470b4" stroke-width="1.9" stroke-dasharray="2.4 .6"/><circle cx="1460.9" cy="140.2" r="3.5" fill="#fff" stroke="#5470b4" stroke-width="1.9" stroke-dasharray="2.4 .6"/>
<g transform="translate(1546.2 129.8) scale(1.0)"><g fill="none" stroke="#2c6e54" stroke-width="1.9" stroke-linecap="round" stroke-linejoin="round"><path d="M-7.2 -9.8 V-15.6"/><path d="M-10 -6.6 H-16"/><path d="M-1.4 -9.6 L0.8 -12.6 V-14"/><path d="M4.6 -6.4 L7.8 -5.4 H11.2"/><path d="M7.6 1.2 H10.8 L12.8 4.2"/><path d="M-7.8 -0.4 L-11.2 1.2 H-14.2"/><path d="M-6 6.2 L-5.2 9.8 L-6.2 12.4"/><path d="M0.4 9.2 L1.8 12.2 L4 13.8"/></g><circle cx="-7.1" cy="-6.5" r="3.2" fill="#d8ecd0" stroke="#2a7c9c" stroke-width="1.8"/><ellipse cx="0" cy="0" rx="6.6" ry="9.2" transform="rotate(-35)" fill="url(#gbug)" stroke="#2a7c9c" stroke-width="2"/><path d="M-3.6 -2.2 L3.2 4.6 M-1.2 -5.2 L5.4 1.4" stroke="#4c8c3c" stroke-width="1.5" opacity=".75"/><rect x="-7.4" y="-5.4" width="3" height="2" fill="#2c7a2c" transform="rotate(-40 -6 -4.4)"/></g>
<path d="M2139.6 123.4 L2144 119.2 L2148.4 123.4 M2139.6 128.6 L2144 132.8 L2148.4 128.6" fill="none" stroke="#fff" stroke-width="2.3" stroke-linecap="round" stroke-linejoin="round"/>
<!-- editor -->
<path d="M81 171 H95 L101 177 V197 H81 Z" fill="#f5f7fd" stroke="#708652" stroke-width="2" stroke-linejoin="miter"/><path d="M94.5 172 V177.5 H100" fill="#e9efe0" stroke="#708652" stroke-width="1.6"/><path d="M81 171 V197" stroke="#8a9a5a" stroke-width="2" stroke-dasharray="2 2"/><rect x="97.5" y="179" width="1.8" height="16" fill="#ead8cc"/><rect x="82" y="194" width="18" height="2" fill="#c9d6c2"/><path d="M84 191.8 V178 H91.5 a4.6 4.8 0 0 1 0 9.6 H87.8 V191.8 Z M87.8 181.2 V184.6 H91 a1.7 1.7 0 0 0 0 -3.4 Z" fill="#5cc466" fill-rule="evenodd" opacity=".92"/><rect x="84" y="178" width="1.8" height="6" fill="#4a7ac8" opacity=".8"/><path d="M517 171 H531 L537 177 V197 H517 Z" fill="#f5f7fd" stroke="#708652" stroke-width="2" stroke-linejoin="miter"/><path d="M530.5 172 V177.5 H536" fill="#e9efe0" stroke="#708652" stroke-width="1.6"/><path d="M517 171 V197" stroke="#8a9a5a" stroke-width="2" stroke-dasharray="2 2"/><rect x="533.5" y="179" width="1.8" height="16" fill="#ead8cc"/><rect x="518" y="194" width="18" height="2" fill="#c9d6c2"/><path d="M520 191.8 V178 H527.5 a4.6 4.8 0 0 1 0 9.6 H523.8 V191.8 Z M523.8 181.2 V184.6 H527 a1.7 1.7 0 0 0 0 -3.4 Z" fill="#5cc466" fill-rule="evenodd" opacity=".92"/><rect x="520" y="178" width="1.8" height="6" fill="#4a7ac8" opacity=".8"/>
<path d="M947 175 L951.6 175 L956 179.2 L960.4 175 L965 175 L965 179.4 L960.6 184 L965 188.6 L965 193 L960.4 193 L956 188.8 L951.6 193 L947 193 L947 188.6 L951.4 184 L947 179.4 Z" fill="#fff" stroke="#000" stroke-width="2" stroke-linejoin="miter"/>
<rect x="1141" y="173" width="18" height="6" fill="none" stroke="#595959" stroke-width="2"/><rect x="1185" y="173" width="18" height="18" fill="none" stroke="#595959" stroke-width="2"/><rect x="1185" y="176.1" width="18" height="1.8" fill="#595959"/>
<circle cx="128.5" cy="361.5" r="8" fill="#dde5ee" stroke="#b9c6d6" stroke-width="1.6"/><rect x="124" y="360.5" width="9" height="2" fill="#7b8ca6"/>
<circle cx="79" cy="389" r="10.8" fill="#d2373a" stroke="#a82529" stroke-width="1.4"/><path d="M74.3 384.3 L83.7 393.7 M83.7 384.3 L74.3 393.7" stroke="#fff" stroke-width="3.4" stroke-linecap="round"/>
<g fill="none" stroke="#6b635c" stroke-width="1.5"><path d="M29.2 195.6 V190.8 H39.2 V198.6 H35.6"/><rect x="24.8" y="197" width="10.4" height="8"/></g><rect x="28.4" y="190" width="11.6" height="2.8" fill="#6b635c"/><rect x="24" y="196.2" width="12" height="2.8" fill="#6b635c"/>
<!-- console -->
<rect x="1246" y="170" width="26" height="22" rx="2.4" fill="url(#gmon)"/><rect x="1248" y="172" width="22" height="18" fill="#737c96"/><rect x="1250" y="174" width="18" height="14" fill="#fff"/><rect x="1250" y="174" width="18" height="1.6" fill="#d8f2fc"/><rect x="1250" y="174" width="1.8" height="14" fill="#d8f2fc"/><rect x="1252" y="178.2" width="10" height="2" fill="#2e3d84"/><rect x="1252" y="182.2" width="14" height="2" fill="#2e3d84"/><rect x="1254.2" y="192" width="9.6" height="2.4" fill="#34589e"/><rect x="1248" y="194" width="22" height="2" fill="#264c94"/>
<path d="M1383 175 L1387.6 175 L1392 179.2 L1396.4 175 L1401 175 L1401 179.4 L1396.6 184 L1401 188.6 L1401 193 L1396.4 193 L1392 188.8 L1387.6 193 L1383 193 L1383 188.6 L1387.4 184 L1383 179.4 Z" fill="#fff" stroke="#000" stroke-width="2" stroke-linejoin="miter"/>
<circle cx="1435" cy="178.8" r="5.9" fill="url(#gbp)" stroke="#2a6cb8" stroke-width="2"/><circle cx="1448.9" cy="189" r="5.9" fill="url(#gbp)" stroke="#2a6cb8" stroke-width="2"/>
<path d="M1797 167 H1809.6 L1816.8 174.2 V193 H1797 Z" fill="#f0f4fc" stroke="#bfae7c" stroke-width="2" stroke-linejoin="miter"/><path d="M1809.8 167.4 V174 H1816.6 Z" fill="#e2c98c"/><g fill="#5468a6"><rect x="1800" y="172" width="8" height="2"/><rect x="1800" y="176" width="14" height="2"/><rect x="1800" y="180" width="12" height="2"/><rect x="1800" y="184" width="10" height="2"/><rect x="1800" y="188" width="10" height="2"/></g><path d="M1813.6 183.7 L1824.4 194.5 M1824.4 183.7 L1813.6 194.5" stroke="#fff" stroke-width="6.4" stroke-linecap="round"/><path d="M1814 184.1 L1824 194.1 M1824 184.1 L1814 194.1" stroke="#454545" stroke-width="4.4" stroke-linecap="round"/><path d="M1814.4 184.5 L1823.6 193.7 M1823.6 184.5 L1814.4 193.7" stroke="#868686" stroke-width="1.6" stroke-linecap="round"/>
<rect x="1855.1" y="177" width="23.9" height="18" fill="url(#gw)" stroke="#b9ad88" stroke-width="2"/><path d="M1854.1 195 H1880" stroke="#8c9cba" stroke-width="2"/><rect x="1854.1" y="176" width="25.9" height="6.2" fill="#3b69b1"/><rect x="1856.1" y="178" width="21.9" height="2.4" fill="#68b8ea"/><path d="M1869 187 L1875 192" stroke="#b8c0c8" stroke-width="1.4"/><circle cx="1867.2" cy="184.6" r="1.6" fill="none" stroke="#1c2c6c" stroke-width="1.4"/><g transform="translate(1874.6 177.6) rotate(-48)"><path d="M-7 -4.2 Q-3 -3 0 -3.6 L3 -6.2 Q7.6 -7 7.6 0 Q7.6 7 3 6.2 L0 3.6 Q-3 3 -7 4.2 Q-9 0 -7 -4.2 Z" fill="url(#gpin)" stroke="#2f8a34" stroke-width="1.2"/><ellipse cx="4.6" cy="0" rx="1.6" ry="4" fill="#9fd87c" opacity=".7"/></g>
<rect x="1898" y="168" width="26" height="22" rx="3" fill="#d9d9d9"/><rect x="1902" y="172" width="18" height="14" fill="#f7f7f7"/><rect x="1904" y="176" width="10" height="2" fill="#d9d9d9"/><rect x="1904" y="180" width="14" height="2" fill="#d9d9d9"/><rect x="1906" y="190" width="10" height="2" fill="#d9d9d9"/><rect x="1900" y="192" width="22" height="2" fill="#d9d9d9"/>
<rect x="1957" y="173" width="26" height="22" fill="url(#gw)" stroke="url(#gframe)" stroke-width="2"/><rect x="1958" y="178.5" width="24" height="1.5" fill="#bcd6f2"/><rect x="1956" y="172" width="28" height="6.6" fill="#416fb4"/><rect x="1958" y="174" width="24" height="2.6" fill="#62b0ea"/><path d="M1960 196.6 Q1975 196.6 1979.6 184" stroke="#f7e6a0" stroke-width="2.2" fill="none" opacity=".7"/><path d="M1979 168.89999999999998 L1985.3 175.2 L1979 181.5 L1972.7 175.2 Z" fill="url(#gd)" stroke="#9a7a22" stroke-width="1.8" stroke-linejoin="round"/><path d="M1979 171.29999999999998 V179.1 M1975.1 175.2 H1982.9" stroke="#fffbe6" stroke-width="2.7"/>
<rect x="2021" y="173" width="18" height="6" fill="none" stroke="#595959" stroke-width="2"/><rect x="2065" y="173" width="18" height="18" fill="none" stroke="#595959" stroke-width="2"/><rect x="2065" y="176.1" width="18" height="1.8" fill="#595959"/>
<!-- debug -->
<g transform="translate(1259.6 853.4) scale(0.96)"><g fill="none" stroke="#2c6e54" stroke-width="1.9" stroke-linecap="round" stroke-linejoin="round"><path d="M-7.2 -9.8 V-15.6"/><path d="M-10 -6.6 H-16"/><path d="M-1.4 -9.6 L0.8 -12.6 V-14"/><path d="M4.6 -6.4 L7.8 -5.4 H11.2"/><path d="M7.6 1.2 H10.8 L12.8 4.2"/><path d="M-7.8 -0.4 L-11.2 1.2 H-14.2"/><path d="M-6 6.2 L-5.2 9.8 L-6.2 12.4"/><path d="M0.4 9.2 L1.8 12.2 L4 13.8"/></g><circle cx="-7.1" cy="-6.5" r="3.2" fill="#d8ecd0" stroke="#2a7c9c" stroke-width="1.8"/><ellipse cx="0" cy="0" rx="6.6" ry="9.2" transform="rotate(-35)" fill="url(#gbug)" stroke="#2a7c9c" stroke-width="2"/><path d="M-3.6 -2.2 L3.2 4.6 M-1.2 -5.2 L5.4 1.4" stroke="#4c8c3c" stroke-width="1.5" opacity=".75"/><rect x="-7.4" y="-5.4" width="3" height="2" fill="#2c7a2c" transform="rotate(-40 -6 -4.4)"/></g>
<rect x="1831" y="839" width="20" height="20" fill="#d9edfc" stroke="#a9afc9" stroke-width="2"/><rect x="1835" y="843" width="20" height="19.8" fill="url(#gcol)" stroke="#8991ad" stroke-width="2"/><rect x="1838" y="852" width="14" height="2.2" fill="#0a2a6a"/><rect x="1841" y="854.6" width="11" height="1" fill="#c4def6"/>
<path d="M1876.4 838.6 L1889.6 851.8 M1889.6 838.6 L1876.4 851.8" stroke="#dcdcdc" stroke-width="6.6" stroke-linecap="round"/><path d="M1876.4 838.6 L1889.6 851.8 M1889.6 838.6 L1876.4 851.8" stroke="#f3f3f3" stroke-width="4.2" stroke-linecap="round"/><path d="M1884.2 848.4 L1897.8 862 M1897.8 848.4 L1884.2 862" stroke="#d6d6d6" stroke-width="6.8" stroke-linecap="round"/><path d="M1884.2 848.4 L1897.8 862 M1897.8 848.4 L1884.2 862" stroke="#e4e4e4" stroke-width="4.6" stroke-linecap="round"/>
<path d="M1931 847 H1944.4 V842.6 L1953.4 849 L1944.4 855.4 V851.2 H1931 Z" fill="#f4f4f0" stroke="#eeeeea" stroke-width="1"/>
<g fill="none" stroke="#111" stroke-width="1.5"><circle cx="1986.4" cy="840.8" r="3.6"/><circle cx="1986.4" cy="850.8" r="3.6"/><circle cx="1986.4" cy="860.8" r="3.6"/></g>
<rect x="2021" y="841" width="18" height="6" fill="none" stroke="#595959" stroke-width="2"/><rect x="2065" y="841" width="18" height="18" fill="none" stroke="#595959" stroke-width="2"/><rect x="2065" y="844.1" width="18" height="1.8" fill="#595959"/>
<path d="M1242.2 889.2 L1249 896 L1255.8 889.2" fill="none" stroke="#7d7d7d" stroke-width="2.2" stroke-linecap="round" stroke-linejoin="round"/><path d="M1274.2 923.4000000000001 L1281 930.2 L1287.8 923.4000000000001" fill="none" stroke="#7d7d7d" stroke-width="2.2" stroke-linecap="round" stroke-linejoin="round"/><path d="M1306.2 957.6 L1313 964.4 L1319.8 957.6" fill="none" stroke="#7d7d7d" stroke-width="2.2" stroke-linecap="round" stroke-linejoin="round"/>
<rect x="1276.2" y="876.2" width="31.4" height="31.4" rx="5.6" fill="url(#gfrog)" stroke="#2a3f2c" stroke-width="1"/><path d="M1284 880 H1300.4 V886.4 H1302 V880 H1304.4 V890.4 H1300.4 V896 H1304.4 V905 H1300.4 V899.6 H1284 V905 H1280 V896 H1284 V890.4 H1280 V880 H1282.4 V886.4 H1284 Z" fill="#69b751"/><rect x="1288.4" y="882" width="2.2" height="2.6" fill="#223322"/><rect x="1294.4" y="882" width="2.2" height="2.6" fill="#223322"/><rect x="1288.4" y="884.6" width="2.2" height="1.6" fill="#e4f0e0"/><rect x="1294.4" y="884.6" width="2.2" height="1.6" fill="#e4f0e0"/>
<path d="M1329 913.4 Q1320 910.6 1315 916" fill="none" stroke="#1f4f9c" stroke-width="2.2"/><path d="M1311.8 913.4 L1318.6 914 L1316.8 920.4 L1311.8 920.6 Z" fill="#1f4f9c"/><path d="M1326.4 939.4 Q1332 938.6 1334.4 934.4" fill="none" stroke="#1f4f9c" stroke-width="2.2"/><path d="M1337 931.4 L1336.8 938.4 L1330.4 932 Z" fill="#1f4f9c"/>
<path d="M1339.4 919.6 L1339.4 921.8 L1337.5 922.5 L1336.9 924.1 L1337.7 925.9 L1336.1 927.5 L1334.3 926.7 L1332.7 927.3 L1332.0 929.2 L1329.8 929.2 L1329.1 927.3 L1327.5 926.7 L1325.7 927.5 L1324.1 925.9 L1324.9 924.1 L1324.3 922.5 L1322.4 921.8 L1322.4 919.6 L1324.3 918.9 L1324.9 917.3 L1324.1 915.5 L1325.7 913.9 L1327.5 914.7 L1329.1 914.1 L1329.8 912.2 L1332.0 912.2 L1332.7 914.1 L1334.3 914.7 L1336.1 913.9 L1337.7 915.5 L1336.9 917.3 L1337.5 918.9 Z" fill="url(#ggear)" stroke="#a08458" stroke-width="1.5" stroke-linejoin="round"/><circle cx="1330.9" cy="920.7" r="2" fill="#c8c8c8" stroke="#a08458" stroke-width=".8"/>
<rect x="1311.3" y="927" width="6.8" height="12" fill="url(#gyb)" stroke="#a5872a" stroke-width="2"/><rect x="1318.1" y="927" width="6.8" height="12" fill="url(#gyb)" stroke="#a5872a" stroke-width="2"/>
<path d="M1369.2 955.7 L1369.2 957.9 L1367.4 958.5 L1366.7 960.2 L1367.6 961.9 L1366.0 963.5 L1364.3 962.6 L1362.6 963.3 L1362.0 965.1 L1359.8 965.1 L1359.2 963.3 L1357.5 962.6 L1355.8 963.5 L1354.2 961.9 L1355.1 960.2 L1354.4 958.5 L1352.6 957.9 L1352.6 955.7 L1354.4 955.1 L1355.1 953.4 L1354.2 951.7 L1355.8 950.1 L1357.5 951.0 L1359.2 950.3 L1359.8 948.5 L1362.0 948.5 L1362.6 950.3 L1364.3 951.0 L1366.0 950.1 L1367.6 951.7 L1366.7 953.4 L1367.4 955.1 Z" fill="url(#ggear)" stroke="#5e3c2c" stroke-width="1.5" stroke-linejoin="round"/><circle cx="1360.9" cy="956.8" r="2" fill="#7a5a4a" stroke="#5e3c2c" stroke-width=".8"/>
<rect x="1343" y="961.2" width="7.0" height="11.6" fill="url(#gyb)" stroke="#a5872a" stroke-width="2"/><rect x="1350.0" y="961.2" width="7.0" height="11.6" fill="url(#gyb)" stroke="#a5872a" stroke-width="2"/>
<rect x="1376.1" y="982.3" width="23.9" height="5.6" fill="url(#gsf)"/><rect x="1376.1" y="990.1" width="23.9" height="5.8" fill="url(#gsf)"/><rect x="1376.1" y="998" width="23.9" height="5.6" fill="url(#gsf)"/>
<rect x="1321.3" y="1013.2" width="13.8" height="27.4" rx="1" fill="#e8eaf0" stroke="#a9aa94" stroke-width="1.6"/><rect x="1323.4" y="1015" width="9.8" height="4.8" fill="#c2c8da"/><path d="M1324 1015.4 L1327.4 1017.2 L1324 1019 Z" fill="#4fa050"/><rect x="1323.4" y="1022" width="9.8" height="4.4" fill="#fafafc"/><rect x="1323.4" y="1024.4" width="9.8" height="2" fill="#c8ccdc"/><rect x="1323.4" y="1028.8" width="9.8" height="10" fill="#b0b8d2"/><rect x="1323.4" y="1028.8" width="9.8" height="2.4" fill="#d8dcea"/><path d="M1310.8 1028.8 L1323 1035 L1310.8 1041.2 Z" fill="#6cba68" stroke="#3e8e4a" stroke-width="1.4" stroke-linejoin="round"/>
<!-- rtrim -->
<g fill="none" stroke="#6b635c" stroke-width="1.5"><path d="M2133.2 195.6 V190.8 H2143.2 V198.6 H2139.6"/><rect x="2128.8" y="197" width="10.4" height="8"/></g><rect x="2132.4" y="190" width="11.6" height="2.8" fill="#6b635c"/><rect x="2128" y="196.2" width="12" height="2.8" fill="#6b635c"/>
<rect x="2120.8" y="228.6" width="26.4" height="24.6" fill="#fff" stroke="#5a6480" stroke-width="1.6"/><rect x="2120" y="227.8" width="28" height="5.6" fill="#7181a2"/><rect x="2122" y="229.6" width="24" height="1.4" fill="#96a4c0"/><g fill="#cfd7e8"><rect x="2122" y="236" width="24" height="2"/><rect x="2122" y="240" width="24" height="2"/><rect x="2122" y="244" width="24" height="2"/><rect x="2122" y="248" width="24" height="2"/></g><rect x="2128.4" y="233" width="1.6" height="20" fill="#6a7694"/><circle cx="2145" cy="251" r="6" fill="#f8e596" stroke="#c6a63e" stroke-width="1.6"/>
<path d="M2123 300 V273.2 H2144.8 V296" fill="#f4f6fc" stroke="#c6b67e" stroke-width="2"/><path d="M2124 299 Q2130 302.4 2136 300.4" fill="none" stroke="#b8c4dc" stroke-width="2"/><g fill="#7484b4"><rect x="2126" y="278" width="16" height="2"/><rect x="2126" y="282" width="16" height="2"/><rect x="2126" y="286" width="12" height="2"/><rect x="2126" y="290" width="9" height="2"/><rect x="2126" y="294" width="9" height="2"/></g><circle cx="2143" cy="292.6" r="8" fill="#5c92ca" stroke="#3c72b2" stroke-width="1.6" stroke-dasharray="2.2 1"/><path d="M2138.8 296.6 V288.6 L2143 293.6 L2147.2 288.6 V296.6" fill="none" stroke="#fff" stroke-width="2" stroke-linejoin="miter"/>
<path d="M2125 340 V319 H2147 V338" fill="#f4f6fc" stroke="#c6b67e" stroke-width="2"/><rect x="2122" y="314.4" width="27.8" height="5" fill="#8a96c2"/><path d="M2126 340 Q2132 344.6 2138 341.6 L2140 338 H2146" fill="#e8ecf8" stroke="#b8c4dc" stroke-width="1.6"/><rect x="2128" y="322" width="6" height="2.4" fill="#3aa848"/><rect x="2128" y="328" width="6" height="2.4" fill="#e8504c"/><rect x="2128" y="334" width="6" height="2.4" fill="#3aa848"/><g fill="#aab6d6"><rect x="2136" y="322" width="8" height="2.4"/><rect x="2138" y="328" width="6" height="2.4"/><rect x="2136" y="334" width="8" height="2.4"/></g>
<path d="M2122 359 H2141 V383 H2122" fill="#f0f6fc" stroke="#c6b67e" stroke-width="2"/><g fill="#24427c"><rect x="2120" y="362" width="2.2" height="2.2"/><rect x="2120" y="366" width="2.2" height="2.2"/><rect x="2120" y="370" width="2.2" height="2.2"/><rect x="2120" y="374" width="2.2" height="2.2"/><rect x="2120" y="378" width="2.2" height="2.2"/></g><g fill="#3a66b0"><rect x="2123.6" y="362" width="2.2" height="2.2"/><rect x="2123.6" y="366" width="2.2" height="2.2"/><rect x="2123.6" y="370" width="2.2" height="2.2"/><rect x="2123.6" y="374" width="2.2" height="2.2"/><rect x="2123.6" y="378" width="2.2" height="2.2"/></g><g fill="#8a98c6"><rect x="2128" y="364" width="10" height="2"/><rect x="2128" y="368" width="10" height="2"/><rect x="2128" y="372" width="6" height="2"/><rect x="2128" y="376" width="5" height="2"/></g><g stroke="#1c3a2c" stroke-width="1.6" fill="none"><path d="M2134 371 L2139 375 M2150 373 L2146 376 M2133 381 L2138 379.4 M2152 381 L2147.4 379.6 M2138 387.4 L2140.4 383 M2147 386.4 L2145 383 M2142.6 369.6 V373.6"/></g><circle cx="2142.6" cy="378.8" r="4.6" fill="#b8d85c" stroke="#2c6a5c" stroke-width="1.6"/><circle cx="2142.8" cy="379" r="1.6" fill="#f4f8c0"/>
<rect x="2121" y="407" width="30" height="21.8" rx="1" fill="url(#gw)" stroke="#8991ad" stroke-width="2"/><path d="M2132.4 412.2 L2142 418 L2132.4 423.8 Z" fill="#6a7088" stroke="#6a7088" stroke-width="1" stroke-linejoin="round"/>
<!-- status -->
<path d="M1999 1181 Q1999.4 1170 1996 1163.2 H2003 Q2011.6 1163 2013 1181 Z" fill="url(#gf)" stroke="#a07a34" stroke-width="1.6" stroke-linejoin="round"/><path d="M2003 1163.2 H1993.4 Q1989.4 1163.6 1989.6 1168.2 H1983.4 L1988.6 1175 L1995.4 1168.2 H1992.6 Q1992.6 1166.4 1994.6 1166.2 H1997.6" fill="#f2f2f2" stroke="#8c8c8c" stroke-width="1.5" stroke-linejoin="round"/>
<path d="M2053.7 1157.4 Q2056.4 1168.6 2068.2 1172 Q2056.4 1175.4 2053.7 1186.6 Q2051 1175.4 2039.2 1172 Q2051 1168.6 2053.7 1157.4 Z" fill="url(#gstar)" stroke="#b99a40" stroke-width="1.8" stroke-linejoin="round"/>
<circle cx="2098.9" cy="1170.8" r="13.8" fill="#a9cdee" stroke="#2a5c9c" stroke-width="2.2"/><path d="M2098.9 1159.2 L2105.7 1180.2 L2087.9 1167.2 L2109.9 1167.2 L2092.1 1180.2 Z" fill="none" stroke="#2a5c9c" stroke-width="1.7" stroke-linejoin="round"/><path d="M2098.9 1159.2 L2109.9 1167.2 L2105.7 1180.2 L2092.1 1180.2 L2087.9 1167.2 Z" fill="none" stroke="#2a5c9c" stroke-width="1.3" opacity=".85"/>
<circle cx="2142.8" cy="1171" r="13.6" fill="url(#gcomp)" stroke="#b89458" stroke-width="2"/><path d="M2150.6 1160.2 L2144.6 1173 L2141 1169 Z" fill="#a83a34"/><path d="M2135 1181.8 L2141 1169 L2144.6 1173 Z" fill="#c49a52"/>
</svg>
</div>
</body>
</html>
